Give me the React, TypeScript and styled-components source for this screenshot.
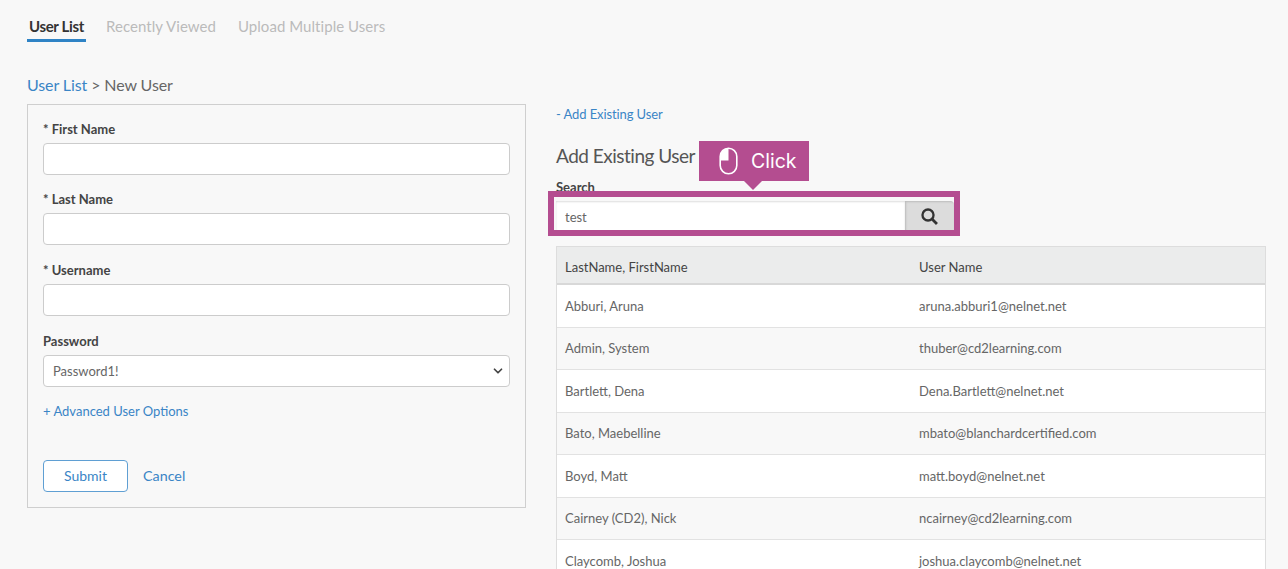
import React from 'react';
import styled, { createGlobalStyle } from 'styled-components';
import { ChevronDown } from 'lucide-react';

const Global = createGlobalStyle`
  html, body { margin: 0; padding: 0; height: 569px; overflow: hidden; background: #f8f8f8; }
  body { font-family: Lato, "Liberation Sans", sans-serif; color: #555; }
  * { box-sizing: border-box; }
`;

const Page = styled.div`
  padding: 16px 22px 0 27px;
  height: 569px;
  overflow: hidden;
`;

const Tabs = styled.div`
  display: flex;
  gap: 18px;
  height: 26px;
`;

const Tab = styled.div<{ $active?: boolean }>`
  padding: 0 2px;
  height: 26px;
  line-height: 21px;
  font-size: 15px;
  font-weight: ${(p) => (p.$active ? 700 : 400)};
  letter-spacing: ${(p) => (p.$active ? '-0.35px' : '0.05px')};
  color: ${(p) => (p.$active ? '#333' : '#bbb')};
  border-bottom: ${(p) => (p.$active ? '3px solid #2f83c5' : 'none')};
`;

const Columns = styled.div`
  display: grid;
  grid-template-columns: 499px 710px;
  column-gap: 30px;
  margin-top: 33px;
`;

const Left = styled.div``;

const Crumb = styled.div`
  font-size: 16px;
  line-height: 20px;
  margin-bottom: 9px;
  color: #666;
  letter-spacing: -0.1px;
`;

const Link = styled.a`
  color: #3a85c6;
  text-decoration: none;
`;

const Panel = styled.div`
  border: 1px solid #cfcfcf;
  height: 404px;
  padding: 15px 15px 0;
`;

const Field = styled.div`
  height: 70.4px;
`;

const PasswordField = styled(Field)`
  margin-top: 1px;
`;

const Label = styled.div`
  font-size: 13px;
  font-weight: 700;
  line-height: 19px;
  color: #444;
  margin-bottom: 4px;
`;

const TextBox = styled.div`
  height: 32px;
  background: #fff;
  border: 1px solid #ccc;
  border-radius: 4px;
`;

const SelectBox = styled(TextBox)`
  display: flex;
  align-items: center;
  justify-content: space-between;
  padding: 0 4px 0 9px;
  font-size: 13px;
  color: #666;
`;

const Advanced = styled(Link)`
  display: block;
  font-size: 13px;
  line-height: 18px;
  margin-top: -1px;
`;

const Actions = styled.div`
  display: flex;
  align-items: center;
  gap: 15px;
  margin-top: 40px;
`;

const Submit = styled.button`
  width: 85px;
  height: 32px;
  background: #fff;
  border: 1px solid #5f9fd3;
  border-radius: 4px;
  color: #3a85c6;
  font: 400 14px Lato, sans-serif;
`;

const CancelLink = styled(Link)`
  font-size: 14.3px;
`;

const Right = styled.div`
  padding-top: 30px;
`;

const SmallLink = styled(Link)`
  display: block;
  font-size: 13px;
  line-height: 18px;
  letter-spacing: -0.1px;
`;

const Heading = styled.div`
  font-size: 19px;
  line-height: 24px;
  letter-spacing: -0.5px;
  color: #555;
  margin-top: 21px;
`;

const SearchBlock = styled.div`
  position: relative;
  margin-top: 11px;
`;

const SearchLabel = styled(Label)`
  line-height: 16px;
  margin-bottom: 6px;
`;

const SearchRow = styled.div`
  display: flex;
  width: 398px;
  height: 31px;
  background: #fff;
  border-radius: 4px;
`;

const SearchValue = styled.div`
  flex: 1;
  padding-left: 9px;
  font-size: 13px;
  line-height: 32px;
  color: #666;
  box-shadow: inset 0 1px 2px #ddd;
`;

const SearchBtn = styled.div`
  width: 49px;
  display: flex;
  align-items: center;
  justify-content: center;
  background: #dcdcdc;
  border-radius: 0 4px 0 0;
  box-shadow: inset 1px 1px 2px #bbb;
`;

const Highlight = styled.div`
  position: absolute;
  left: -8px;
  top: 12px;
  width: 412px;
  height: 45px;
  border: 6px solid #b44d90;
  pointer-events: none;
`;

const Callout = styled.div`
  position: absolute;
  left: 143px;
  top: -38px;
  width: 110px;
  height: 40px;
  background: #b44d90;
  color: #fff;
  display: flex;
  align-items: center;
  gap: 13px;
  padding-left: 20px;
  font-family: Inter, sans-serif;
  font-size: 19.5px;

  &::after {
    content: '';
    position: absolute;
    left: 45px;
    bottom: -9px;
    border-left: 9px solid transparent;
    border-right: 9px solid transparent;
    border-top: 9px solid #b44d90;
  }
`;

const Table = styled.div`
  margin-top: 14px;
  border: 1px solid #ddd;
  border-bottom: none;
`;

const Row = styled.div<{ $head?: boolean; $alt?: boolean }>`
  display: grid;
  grid-template-columns: 354px 1fr;
  align-items: center;
  padding-left: 8px;
  padding-top: ${(p) => (p.$head ? '3px' : '0')};
  height: ${(p) => (p.$head ? '38px' : '42.5px')};
  font-size: 13px;
  color: ${(p) => (p.$head ? '#444' : '#666')};
  background: ${(p) => (p.$head ? '#ebecec' : p.$alt ? '#f8f8f8' : '#fff')};
  border-bottom: ${(p) => (p.$head ? '2px solid #d8d8d8' : '1px solid #e2e2e2')};
`;

const users = [
  ['Abburi, Aruna', 'aruna.abburi1@nelnet.net'],
  ['Admin, System', 'thuber@cd2learning.com'],
  ['Bartlett, Dena', 'Dena.Bartlett@nelnet.net'],
  ['Bato, Maebelline', 'mbato@blanchardcertified.com'],
  ['Boyd, Matt', 'matt.boyd@nelnet.net'],
  ['Cairney (CD2), Nick', 'ncairney@cd2learning.com'],
  ['Claycomb, Joshua', 'joshua.claycomb@nelnet.net'],
];

const MouseIcon = () => (
  <svg width="19" height="28" viewBox="0 0 19 28" fill="none">
    <rect x="1.2" y="1.2" width="16.6" height="25.6" rx="8.3" stroke="#fff" strokeWidth="1.6" />
    <path d="M9.5 1.2A8.3 8.3 0 0 0 1.2 9.5V13.5H9.5Z" fill="#fff" />
  </svg>
);

const SearchIcon = () => (
  <svg width="17" height="17" viewBox="0 0 16 16" fill="none">
    <circle cx="6.6" cy="6.6" r="5.2" stroke="#333" strokeWidth="2.2" />
    <path d="M10.6 10.6L15 15" stroke="#333" strokeWidth="2.6" />
  </svg>
);

export default function App() {
  return (
    <Page>
      <Global />
      <Tabs>
        <Tab $active>User List</Tab>
        <Tab>Recently Viewed</Tab>
        <Tab>Upload Multiple Users</Tab>
      </Tabs>
      <Columns>
        <Left>
          <Crumb>
            <Link>User List</Link> &gt; New User
          </Crumb>
          <Panel>
            <Field>
              <Label>* First Name</Label>
              <TextBox />
            </Field>
            <Field>
              <Label>* Last Name</Label>
              <TextBox />
            </Field>
            <Field>
              <Label>* Username</Label>
              <TextBox />
            </Field>
            <PasswordField>
              <Label>Password</Label>
              <SelectBox>
                Password1!
                <ChevronDown size={14} strokeWidth={3} color="#444" />
              </SelectBox>
            </PasswordField>
            <Advanced>+ Advanced User Options</Advanced>
            <Actions>
              <Submit>Submit</Submit>
              <CancelLink>Cancel</CancelLink>
            </Actions>
          </Panel>
        </Left>
        <Right>
          <SmallLink>- Add Existing User</SmallLink>
          <Heading>Add Existing User</Heading>
          <SearchBlock>
            <SearchLabel>Search</SearchLabel>
            <SearchRow>
              <SearchValue>test</SearchValue>
              <SearchBtn>
                <SearchIcon />
              </SearchBtn>
            </SearchRow>
            <Highlight />
            <Callout>
              <MouseIcon />
              Click
            </Callout>
          </SearchBlock>
          <Table>
            <Row $head>
              <span>LastName, FirstName</span>
              <span>User Name</span>
            </Row>
            {users.map(([name, mail], i) => (
              <Row key={mail} $alt={i % 2 === 1}>
                <span>{name}</span>
                <span>{mail}</span>
              </Row>
            ))}
          </Table>
        </Right>
      </Columns>
    </Page>
  );
}
